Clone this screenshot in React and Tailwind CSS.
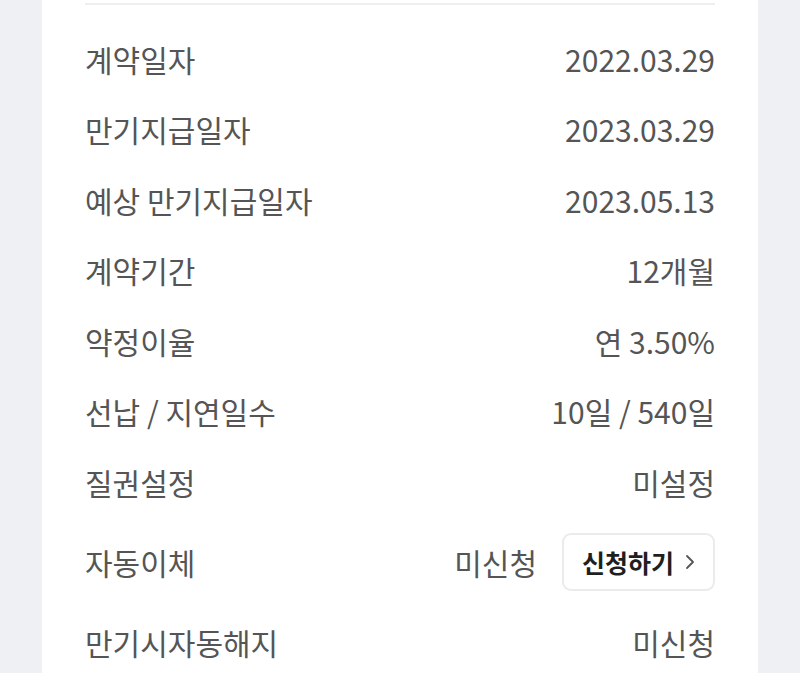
const rows = [
  ['계약일자', '2022.03.29'],
  ['만기지급일자', '2023.03.29'],
  ['예상 만기지급일자', '2023.05.13'],
  ['계약기간', '12개월'],
  ['약정이율', '연 3.50%'],
  ['선납 / 지연일수', '10일 / 540일'],
  ['질권설정', '미설정'],
];

function Row({ label, children, tall }) {
  return (
    <div className={`flex items-center justify-between ${tall ? 'h-[89.5px]' : 'h-[70.5px]'}`}>
      <span>{label}</span>
      {children}
    </div>
  );
}

export default function App() {
  return (
    <div
      className="h-[673px] overflow-hidden bg-[#eff0f4] px-[42px] text-[30px] text-[#555555]"
      style={{ fontFamily: '"Noto Sans CJK KR", "Noto Sans", sans-serif' }}
    >
      <div className="h-full bg-white px-[43px] pt-[3px]">
        <div className="h-[2px] bg-[#eeeeee]" />
        <div className="pt-[19px]">
          {rows.map(([label, value]) => (
            <Row key={label} label={label}>
              <span>{value}</span>
            </Row>
          ))}
          <Row label="자동이체" tall>
            <div className="flex items-center gap-[25px]">
              <span>미신청</span>
              <button className="flex h-[58px] w-[153px] items-center justify-center gap-[11px] rounded-[9px] border-2 border-[#ebebeb] bg-white text-[25px] font-bold text-[#1f1f1f]">
                <span>신청하기</span>
                <svg width="10" height="16" viewBox="0 0 10 16" fill="none">
                  <path d="M2 2l6 6-6 6" stroke="#555555" strokeWidth="1.8" strokeLinecap="round" strokeLinejoin="round" />
                </svg>
              </button>
            </div>
          </Row>
          <Row label="만기시자동해지">
            <span>미신청</span>
          </Row>
        </div>
      </div>
    </div>
  );
}
